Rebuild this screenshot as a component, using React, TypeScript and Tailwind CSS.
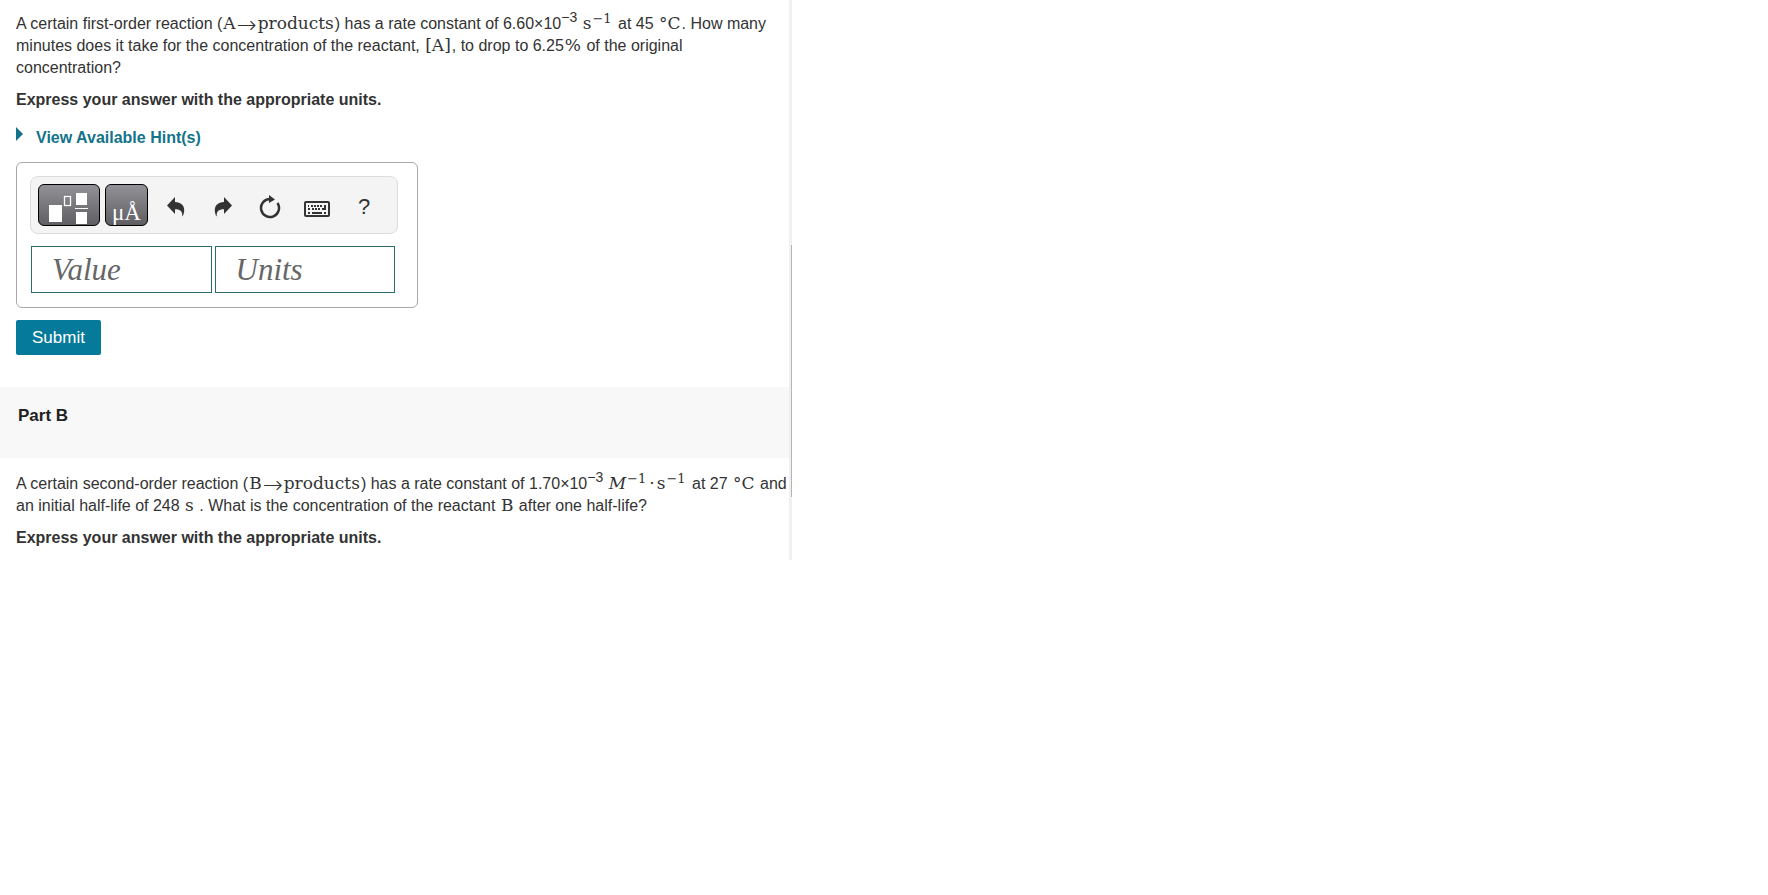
import type { ReactNode } from 'react';

function Serif({ children }: { children: ReactNode }) {
    return <span className="mx-px font-['DejaVu_Serif',serif] text-[17px] leading-none">{children}</span>;
}

function Arrow() {
    return <span className="align-[-4px] font-['DejaVu_Sans',sans-serif] text-2xl font-extralight leading-4">→</span>;
}

function SerifSup({ children }: { children: ReactNode }) {
    return (
        <sup className="mr-0.5 font-['DejaVu_Serif',serif] text-[13px] leading-none">{children}</sup>
    );
}

function SansSup({ children }: { children: ReactNode }) {
    return <sup className="text-sm leading-none">{children}</sup>;
}

function TemplatesIcon() {
    return (
        <svg width="40" height="32" viewBox="0 0 40 32" fill="#fff" aria-hidden="true">
            <rect x="0" y="13" width="13" height="17" />
            <rect x="15.500" y="4.500" width="6" height="9" fill="none" stroke="#fff" strokeWidth="1.300" />
            <rect x="27" y="1" width="11" height="12" />
            <rect x="26" y="16" width="13" height="1" />
            <rect x="27" y="20" width="11" height="12" />
        </svg>
    );
}

function UndoIcon() {
    return (
        <svg width="18" height="20" viewBox="0 0 18 20" fill="#333" aria-hidden="true">
            <path d="M0 8.5 8 0v5c6 .2 9.3 3.4 9.2 8.4-.1 2.600-.8 4.600-2 6.100.5-5-1.600-7.200-7.200-7.200v4.700z" />
        </svg>
    );
}

function RedoIcon() {
    return (
        <svg width="18" height="20" viewBox="0 0 18 20" fill="#333" aria-hidden="true">
            <path d="M18 8.500 10 0v5C4 5.200.7 8.400.8 13.400c.1 2.600.8 4.600 2 6.100-.5-5 1.600-7.200 7.200-7.200v4.700z" />
        </svg>
    );
}

function ResetIcon() {
    return (
        <svg width="22" height="24" viewBox="0 0 22 24" aria-hidden="true">
            <path d="M11 4A9 9 0 1 0 18.500 8" fill="none" stroke="#333" strokeWidth="2.500" />
            <path d="M10 0 16 4.500 10 8z" fill="#333" />
        </svg>
    );
}

function KeyboardIcon() {
    return (
        <svg width="26" height="16" viewBox="0 0 26 16" fill="#333" aria-hidden="true">
            <rect x="1" y="1" width="24" height="14" rx="1" fill="none" stroke="#333" strokeWidth="2" />
            <path d="M4 4h1v2H4zM7 4h2v2H7zM10 4h2v2h-2zM13 4h2v2h-2zM16 4h2v2h-2zM20 4h2v5h-4V7h2zM4 7h2v2H4zM8 7h2v2H8zM11 7h2v2h-2zM14 7h2v2h-2zM4 11h2v2H4zM8 11h10v2H8zM20 11h2v2h-2z" />
        </svg>
    );
}

const iconButton = 'flex h-10 w-8 items-center justify-center';
const darkButton =
    'flex h-[42px] rounded-md border border-black bg-linear-to-b from-[#929298] to-[#5f5f63] text-white';
const answerBox =
    "h-[47px] w-0 flex-1 border border-[#2b6b72] bg-white pl-5 font-['Liberation_Serif',serif] text-[31px] italic text-[#333] placeholder:text-[#666] outline-none";

function AnswerBox() {
    return (
        <div className="w-full max-w-[402px] rounded-md border border-[#a8a8a8] pb-[14px] pl-[13px] pr-[19px] pt-[13px]">
            <div className="flex h-[58px] items-center rounded-lg border border-[#dcdcdc] bg-[#f4f4f4] pl-[7px]">
                <button type="button" aria-label="Templates" className={`${darkButton} w-[62px] items-end justify-center overflow-hidden pb-px`}>
                    <TemplatesIcon />
                </button>
                <button type="button" aria-label="Units symbols" className={`${darkButton} ml-[5px] w-[43px] items-end justify-center font-['Liberation_Serif',serif] text-[23px] leading-6`}>
                    μÅ
                </button>
                <div className="ml-3 flex gap-[15px] pt-1">
                    <button type="button" aria-label="Undo" className={iconButton}>
                        <UndoIcon />
                    </button>
                    <button type="button" aria-label="Redo" className={iconButton}>
                        <RedoIcon />
                    </button>
                    <button type="button" aria-label="Reset" className={iconButton}>
                        <ResetIcon />
                    </button>
                    <button type="button" aria-label="Keyboard shortcuts" className={`${iconButton} pt-1`}>
                        <KeyboardIcon />
                    </button>
                    <button type="button" aria-label="Help" className={`${iconButton} text-[22px] text-[#333]`}>
                        ?
                    </button>
                </div>
            </div>
            <div className="mt-3 flex gap-[3px] pl-px pr-[3px]">
                <input aria-label="Value" placeholder="Value" className={answerBox} />
                <input aria-label="Units" placeholder="Units" className={answerBox} />
            </div>
        </div>
    );
}

export default function App() {
    return (
        <div className="min-h-screen bg-white">
            <div className="flex w-full max-w-[792px] font-['Liberation_Sans',Arial,sans-serif] text-base leading-[22px] text-[#333]">
                <main className="min-w-0 flex-1 pb-[11px]">
                    <section className="pl-4 pt-[13px]">
                        <p>
                            A certain first-order reaction (<Serif>A</Serif><Arrow /><Serif>products</Serif>) has a rate
                            constant of 6.60×10<SansSup>−3</SansSup> <Serif>s</Serif><SerifSup>−1</SerifSup> at
                            45 <Serif>°C</Serif>. How many<br />
                            minutes does it take for the concentration of the
                            reactant, <Serif>[A]</Serif>, to drop to 6.25<Serif>%</Serif> of the original<br />
                            concentration?
                        </p>
                        <p className="mt-[10px] font-bold">Express your answer with the appropriate units.</p>
                        <button type="button" className="mt-4 flex font-bold text-[#12738a]">
                            <svg width="8" height="14" viewBox="0 0 8 14" className="mr-3" fill="#12738a" aria-hidden="true">
                                <path d="M0 0 7 7 0 14z" />
                            </svg>
                            View Available Hint(s)
                        </button>
                        <div className="mt-[13px]">
                            <AnswerBox />
                        </div>
                        <button type="button" className="mt-3 h-[35px] rounded-xs bg-[#067a9b] px-4 text-[17px] text-white">
                            Submit
                        </button>
                    </section>

                    <h2 className="mt-8 h-[71px] bg-[#f8f8f8] pl-[18px] pt-[18px] text-[17px] font-bold text-[#222]">Part B</h2>

                    <section className="pl-4 pt-[15px]">
                        <p>
                            A certain second-order reaction (<Serif>B</Serif><Arrow /><Serif>products</Serif>) has a rate
                            constant of 1.70×10<SansSup>−3</SansSup> <Serif><i>M</i></Serif><SerifSup>−1</SerifSup><Serif>·</Serif><Serif>s</Serif><SerifSup>−1</SerifSup> at
                            27 <Serif>°C</Serif> and<br />
                            an initial half-life of 248 <Serif>s</Serif> . What is the
                            concentration of the reactant <Serif>B</Serif> after one half-life?
                        </p>
                        <p className="mt-[10px] font-bold">Express your answer with the appropriate units.</p>
                    </section>
                </main>

                {/* scroll track */}
                <div className="flex w-[3px] shrink-0 justify-end bg-[#f0f0f0]">
                    <div className="mt-[245px] h-[252px] w-px bg-[#b5b5b5]" />
                </div>
            </div>
        </div>
    );
}
